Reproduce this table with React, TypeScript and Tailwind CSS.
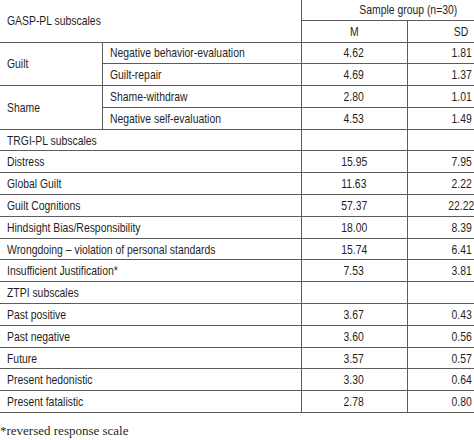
const gasp = [
  { group: 'Guilt', items: [
    { name: 'Negative behavior-evaluation', m: '4.62', sd: '1.81' },
    { name: 'Guilt-repair', m: '4.69', sd: '1.37' },
  ] },
  { group: 'Shame', items: [
    { name: 'Shame-withdraw', m: '2.80', sd: '1.01' },
    { name: 'Negative self-evaluation', m: '4.53', sd: '1.49' },
  ] },
];

const sections = [
  {
    title: 'TRGI-PL subscales',
    rows: [
      { name: 'Distress', m: '15.95', sd: '7.95' },
      { name: 'Global Guilt', m: '11.63', sd: '2.22' },
      { name: 'Guilt Cognitions', m: '57.37', sd: '22.22' },
      { name: 'Hindsight Bias/Responsibility', m: '18.00', sd: '8.39' },
      { name: 'Wrongdoing – violation of personal standards', m: '15.74', sd: '6.41' },
      { name: 'Insufficient Justification*', m: '7.53', sd: '3.81' },
    ],
  },
  {
    title: 'ZTPI subscales',
    rows: [
      { name: 'Past positive', m: '3.67', sd: '0.43' },
      { name: 'Past negative', m: '3.60', sd: '0.56' },
      { name: 'Future', m: '3.57', sd: '0.57' },
      { name: 'Present hedonistic', m: '3.30', sd: '0.64' },
      { name: 'Present fatalistic', m: '2.78', sd: '0.80' },
    ],
  },
];

const line = 'border-[#5c5c5c]';
const cell = `h-[21.8px] p-0 border-b ${line}`;
const num = `${cell} border-l text-center`;

// the source table is set in a narrow face; squeeze Liberation Sans to match
function L({ children }: { children: React.ReactNode }) {
  return <span className="inline-block whitespace-nowrap origin-left scale-x-[0.8]">{children}</span>;
}

function C({ children }: { children: React.ReactNode }) {
  return <span className="inline-block whitespace-nowrap origin-center scale-x-[0.8]">{children}</span>;
}

export default function App() {
  return (
    <div className="w-[474px] h-[440px] overflow-hidden bg-white text-[#1f1f1f]">
      <table
        className="w-[515px] table-fixed border-collapse text-[13px] leading-none"
        style={{ fontFamily: '"Liberation Sans", Arial, sans-serif' }}
      >
        <colgroup>
          <col className="w-[102px]" />
          <col className="w-[199px]" />
          <col className="w-[106px]" />
          <col className="w-[108px]" />
        </colgroup>
        <thead>
          <tr>
            <th rowSpan={2} colSpan={2} className={`p-0 pl-[7px] text-left font-normal border-b ${line}`}>
              <L>GASP-PL subscales</L>
            </th>
            <th colSpan={2} className={`h-[20px] p-0 font-normal border-l border-b ${line}`}>
              <C>Sample group (n=30)</C>
            </th>
          </tr>
          <tr>
            <th className={`h-[22px] p-0 font-normal border-l border-b ${line}`}><C>M</C></th>
            <th className={`h-[22px] p-0 font-normal border-l border-b ${line}`}><C>SD</C></th>
          </tr>
        </thead>
        <tbody>
          {gasp.map((g) =>
            g.items.map((it, i) => (
              <tr key={it.name}>
                {i === 0 && (
                  <td rowSpan={2} className={`p-0 pl-[7px] border-b ${line}`}>
                    <L>{g.group}</L>
                  </td>
                )}
                <td className={`${cell} border-l pl-[7px]`}><L>{it.name}</L></td>
                <td className={num}><C>{it.m}</C></td>
                <td className={num}><C>{it.sd}</C></td>
              </tr>
            ))
          )}
          {sections.map((s) => (
            <>
              <tr key={s.title}>
                <td colSpan={2} className={`${cell} pl-[7px]`}><L>{s.title}</L></td>
                <td className={num}></td>
                <td className={num}></td>
              </tr>
              {s.rows.map((r) => (
                <tr key={r.name}>
                  <td colSpan={2} className={`${cell} pl-[7px]`}><L>{r.name}</L></td>
                  <td className={num}><C>{r.m}</C></td>
                  <td className={num}><C>{r.sd}</C></td>
                </tr>
              ))}
            </>
          ))}
        </tbody>
      </table>
      <p
        className="mt-[11px] text-[13px] leading-none"
        style={{ fontFamily: '"Liberation Serif", "Times New Roman", serif' }}
      >
        *reversed response scale
      </p>
    </div>
  );
}
